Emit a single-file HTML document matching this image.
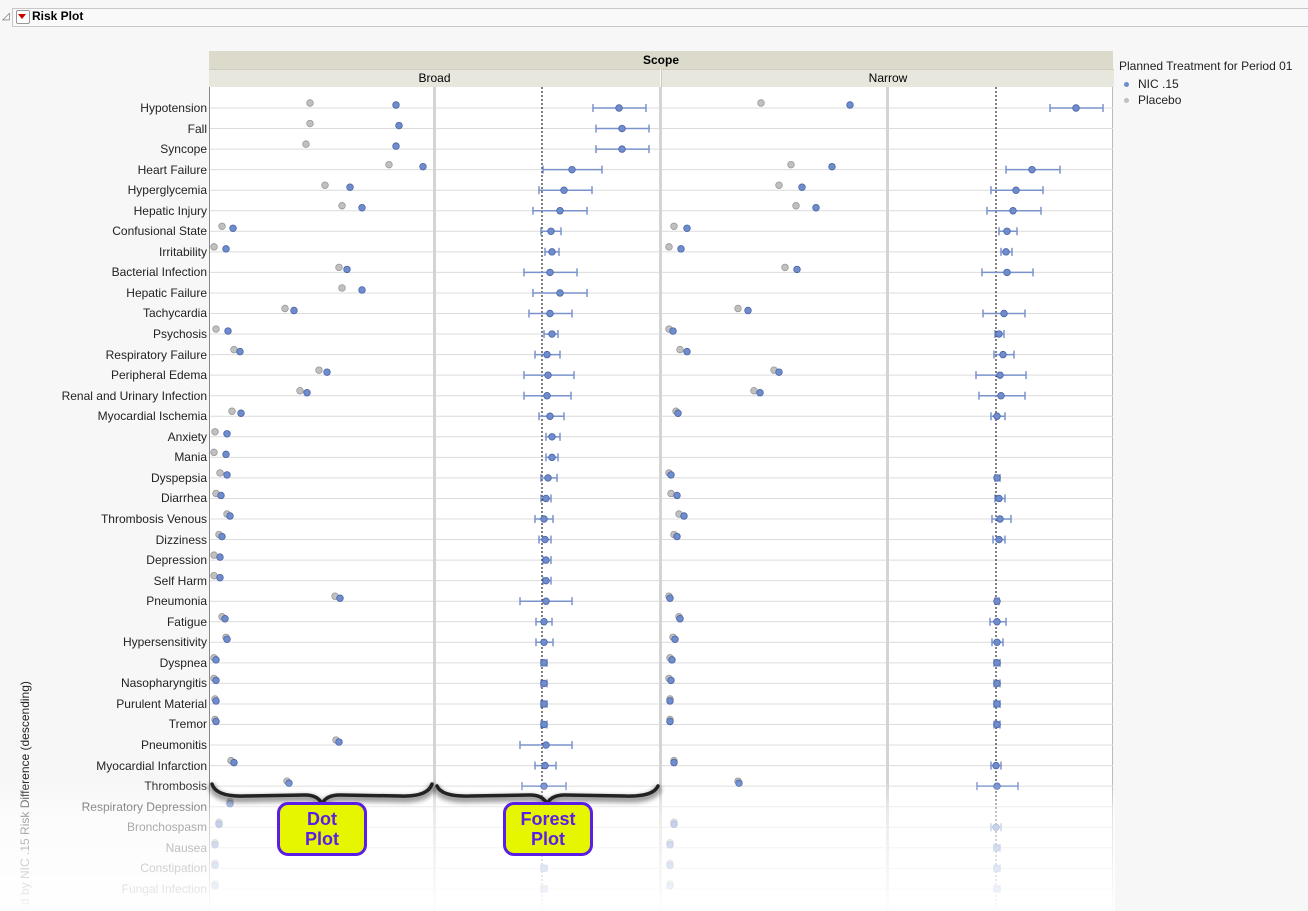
<!DOCTYPE html>
<html style="overflow:hidden;width:1308px;height:911px"><head><meta charset="utf-8"><style>
body{margin:0;width:1308px;height:911px;background:#f7f7f7;font-family:"Liberation Sans",sans-serif;overflow:hidden;position:relative}
.lbl{position:absolute;right:1101px;font-size:12px;color:#222;white-space:nowrap;line-height:16px}
.box{position:absolute;background:#e6f500;border:3px solid #5a1ee6;border-radius:11px;color:#5a1ee6;font-weight:bold;font-size:18px;line-height:20px;text-align:center;box-sizing:border-box;padding-top:4px}
</style></head><body>
<div style="position:absolute;left:12px;top:8px;width:1296px;height:17px;border:1px solid #c8c8c8;border-right:none;background:#f9f9f9"></div>
<div style="position:absolute;left:2px;top:11px;font-size:10px;color:#666">◿</div>
<div style="position:absolute;left:16px;top:10px;width:12px;height:12px;border:1px solid #999;background:#fff;border-radius:2px"></div>
<div style="position:absolute;left:18px;top:14px;width:0;height:0;border-left:4px solid transparent;border-right:4px solid transparent;border-top:5px solid #c00"></div>
<div style="position:absolute;left:32px;top:9px;font-size:12px;font-weight:bold;color:#000">Risk Plot</div>

<div style="position:absolute;left:209px;top:51px;width:904px;height:18px;background:#dcdacb;font-size:12px;font-weight:bold;text-align:center;line-height:18px">Scope</div>
<div style="position:absolute;left:209px;top:69px;width:451px;height:17px;background:#e8e7de;font-size:12px;text-align:center;line-height:17px;border-top:1px solid #cfcdbf">Broad</div>
<div style="position:absolute;left:661px;top:69px;width:452px;height:17px;background:#e8e7de;font-size:12px;text-align:center;line-height:17px;border-top:1px solid #cfcdbf;border-left:1px solid #cfcdbf">Narrow</div>
<div style="position:absolute;left:209px;top:87px;width:904px;height:824px;background:#fff;border-left:1px solid #888;border-right:1px solid #bbb;box-sizing:border-box"></div>

<div style="position:absolute;left:1119px;top:59px;font-size:12px;color:#222">Planned Treatment for Period 01</div>
<div style="position:absolute;left:1124px;top:82px;width:5px;height:5px;border-radius:50%;background:#6f8dcc"></div>
<div style="position:absolute;left:1138px;top:77px;font-size:12px;color:#222">NIC .15</div>
<div style="position:absolute;left:1124px;top:98px;width:5px;height:5px;border-radius:50%;background:#c0c0c0"></div>
<div style="position:absolute;left:1138px;top:93px;font-size:12px;color:#222">Placebo</div>

<svg id="plot" style="position:absolute;left:0;top:0" width="1308" height="911"></svg>

<div id="labels">
<div class="lbl" style="top:100px">Hypotension</div>
<div class="lbl" style="top:121px">Fall</div>
<div class="lbl" style="top:141px">Syncope</div>
<div class="lbl" style="top:162px">Heart Failure</div>
<div class="lbl" style="top:182px">Hyperglycemia</div>
<div class="lbl" style="top:203px">Hepatic Injury</div>
<div class="lbl" style="top:223px">Confusional State</div>
<div class="lbl" style="top:244px">Irritability</div>
<div class="lbl" style="top:264px">Bacterial Infection</div>
<div class="lbl" style="top:285px">Hepatic Failure</div>
<div class="lbl" style="top:305px">Tachycardia</div>
<div class="lbl" style="top:326px">Psychosis</div>
<div class="lbl" style="top:347px">Respiratory Failure</div>
<div class="lbl" style="top:367px">Peripheral Edema</div>
<div class="lbl" style="top:388px">Renal and Urinary Infection</div>
<div class="lbl" style="top:408px">Myocardial Ischemia</div>
<div class="lbl" style="top:429px">Anxiety</div>
<div class="lbl" style="top:449px">Mania</div>
<div class="lbl" style="top:470px">Dyspepsia</div>
<div class="lbl" style="top:490px">Diarrhea</div>
<div class="lbl" style="top:511px">Thrombosis Venous</div>
<div class="lbl" style="top:532px">Dizziness</div>
<div class="lbl" style="top:552px">Depression</div>
<div class="lbl" style="top:573px">Self Harm</div>
<div class="lbl" style="top:593px">Pneumonia</div>
<div class="lbl" style="top:614px">Fatigue</div>
<div class="lbl" style="top:634px">Hypersensitivity</div>
<div class="lbl" style="top:655px">Dyspnea</div>
<div class="lbl" style="top:675px">Nasopharyngitis</div>
<div class="lbl" style="top:696px">Purulent Material</div>
<div class="lbl" style="top:716px">Tremor</div>
<div class="lbl" style="top:737px">Pneumonitis</div>
<div class="lbl" style="top:758px">Myocardial Infarction</div>
<div class="lbl" style="top:778px">Thrombosis</div>
<div class="lbl" style="top:799px">Respiratory Depression</div>
<div class="lbl" style="top:819px">Bronchospasm</div>
<div class="lbl" style="top:840px">Nausea</div>
<div class="lbl" style="top:860px">Constipation</div>
<div class="lbl" style="top:881px">Fungal Infection</div>
</div>
<svg style="position:absolute;left:0;top:0" width="40" height="911"><text transform="translate(29,905) rotate(-90)" font-family="Liberation Sans, sans-serif" font-size="12" fill="#222">d by NIC .15 Risk Difference (descending)</text></svg>

<div style="position:absolute;left:0;top:780px;width:1115px;height:131px;background:linear-gradient(to bottom,rgba(255,255,255,0),rgba(255,255,255,0.55) 25%,rgba(255,255,255,0.97))"></div>

<svg style="position:absolute;left:0;top:0" width="1308" height="911">
<defs><filter id="sh" x="-5%" y="-50%" width="110%" height="250%"><feGaussianBlur stdDeviation="2.5"/></filter></defs>
<g fill="none" stroke-linecap="round">
<path d="M212,784 Q216,797 245,796 L305,795 Q318,795 322,804 Q326,795 340,795 L400,796 Q428,797 432,784" stroke="#000" stroke-width="7" opacity="0.4" filter="url(#sh)" transform="translate(0,3)"/>
<path d="M212,784 Q216,797 245,796 L305,795 Q318,795 322,804 Q326,795 340,795 L400,796 Q428,797 432,784" stroke="#222" stroke-width="3.5"/>
<path d="M437,786 Q442,797 470,796 L530,795 Q543,795 547,804 Q551,795 565,795 L625,796 Q653,797 658,786" stroke="#000" stroke-width="7" opacity="0.4" filter="url(#sh)" transform="translate(0,3)"/>
<path d="M437,786 Q442,797 470,796 L530,795 Q543,795 547,804 Q551,795 565,795 L625,796 Q653,797 658,786" stroke="#222" stroke-width="3.5"/>
</g></svg>
<div class="box" style="left:277px;top:802px;width:90px;height:54px">Dot<br>Plot</div>
<div class="box" style="left:503px;top:802px;width:90px;height:54px">Forest<br>Plot</div>

<script>
var D=[
[310,396,619,593,646,761,850,1076,1050,1103],
[310,399,622,596,649],
[306,396,622,596,649],
[389,423,572,543,602,791,832,1032,1006,1060],
[325,350,564,539,592,779,802,1016,991,1043],
[342,362,560,533,587,796,816,1013,987,1041],
[222,233,551,541,561,674,687,1007,999,1017],
[214,226,552,545,559,669,681,1006,1001,1012],
[339,347,550,524,577,785,797,1007,982,1033],
[342,362,560,533,587],
[285,294,550,529,572,738,748,1004,983,1025],
[216,228,552,544,558,669,673,999,995,1004],
[234,240,547,535,560,680,687,1003,994,1014],
[319,327,548,524,574,774,779,1000,976,1026],
[300,307,547,524,571,754,760,1001,979,1025],
[232,241,550,539,564,676,678,997,991,1005],
[215,227,552,546,560],
[214,226,552,546,558],
[220,227,548,541,557,669,671,997,995,1000],
[216,221,546,541,551,671,677,999,995,1005],
[227,230,544,535,553,679,684,1000,992,1011],
[219,222,545,539,551,674,677,999,993,1005],
[214,220,546,543,551],
[214,220,546,543,551],
[335,340,546,520,572,669,670,997,995,999],
[222,225,544,536,552,679,680,997,990,1006],
[226,227,544,536,553,673,675,997,992,1003],
[214,216,544,541,547,670,672,997,994,1000],
[214,216,544,541,547,669,671,997,994,1000],
[215,216,544,541,547,670,670,997,994,1000],
[215,216,544,541,547,670,670,997,994,1000],
[336,339,546,520,572],
[231,234,545,535,556,674,674,996,991,1001],
[287,289,544,522,566,738,739,997,977,1018],
[230,230,544,541,547],
[219,219,544,541,547,674,674,996,991,1001],
[215,215,544,541,547,670,670,997,994,1000],
[215,215,544,541,547,670,670,997,994,1000],
[215,215,544,541,547,670,670,997,994,1000]
];
var s='';
for(var i=0;i<39;i++){var y=108+20.55*i;s+='<line x1="210" x2="1113" y1="'+y+'" y2="'+y+'" stroke="#dcdcdc"/>';}
s+='<rect x="433" y="87" width="3" height="824" fill="#d4d4d4"/><rect x="659" y="87" width="3" height="824" fill="#d4d4d4"/><rect x="886" y="87" width="3" height="824" fill="#d4d4d4"/>';
s+='<line x1="542" x2="542" y1="87" y2="911" stroke="#000" stroke-dasharray="2,2"/><line x1="996" x2="996" y1="87" y2="911" stroke="#000" stroke-dasharray="2,2"/>';
function dot(x,y,c,st){return '<circle cx="'+x+'" cy="'+y+'" r="3.3" fill="'+c+'" stroke="'+st+'" stroke-width="0.8"/>';}
function fp(c,l,h,y){var r='<line x1="'+l+'" x2="'+h+'" y1="'+y+'" y2="'+y+'" stroke="#7a93cc" stroke-width="1.5"/>';
r+='<line x1="'+l+'" x2="'+l+'" y1="'+(y-4)+'" y2="'+(y+4)+'" stroke="#7a93cc" stroke-width="1.5"/><line x1="'+h+'" x2="'+h+'" y1="'+(y-4)+'" y2="'+(y+4)+'" stroke="#7a93cc" stroke-width="1.5"/>';
return r+dot(c,y,'#6f8dcc','#4a64a8');}
for(var i=0;i<D.length;i++){var d=D[i],y=104+20.55*i;
s+=dot(d[0],y-1,'#c0c0c0','#999')+dot(d[1],y+1,'#6f8dcc','#4a64a8');
s+=fp(d[2],d[3],d[4],y+4);
if(d.length>5){s+=dot(d[5],y-1,'#c0c0c0','#999')+dot(d[6],y+1,'#6f8dcc','#4a64a8');s+=fp(d[7],d[8],d[9],y+4);}
}
document.getElementById('plot').innerHTML=s;
</script>
</body></html>
